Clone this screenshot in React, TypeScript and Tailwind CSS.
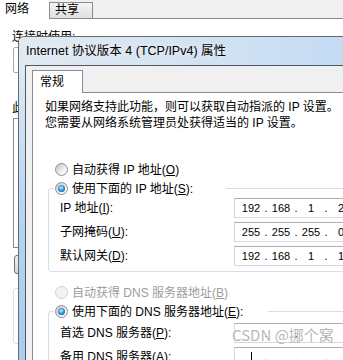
import { Fragment, type ReactNode } from "react";

function Radio({ checked, disabled }: { checked?: boolean; disabled?: boolean }) {
  return (
    <span
      className={`flex h-[13px] w-[13px] shrink-0 items-center justify-center rounded-full border ${
        disabled
          ? "border-[#d0d0d0] bg-[#f3f3f3]"
          : "border-[#8e8f8f] bg-[linear-gradient(135deg,#c4c4c4,#f7f7f7_70%)]"
      }`}
    >
      {checked && (
        <span className="h-[7px] w-[7px] rounded-full bg-[radial-gradient(circle_at_45%_40%,#c6f2ff_0%,#3fa4e6_40%,#155a91_80%,#0b3557_100%)]" />
      )}
    </span>
  );
}

function RadioRow({
  checked,
  disabled,
  className,
  children,
}: {
  checked?: boolean;
  disabled?: boolean;
  className?: string;
  children: ReactNode;
}) {
  return (
    <div
      className={`flex h-[19px] items-center gap-[4px] ${disabled ? "text-[#9d9d9d]" : ""} ${className ?? ""}`}
    >
      <Radio checked={checked} disabled={disabled} />
      <span className="whitespace-nowrap">{children}</span>
    </div>
  );
}

function IpField({ octets, caret }: { octets?: string[]; caret?: boolean }) {
  const parts = octets ?? ["", "", "", ""];
  return (
    <div className="flex h-[20px] w-[130px] items-center border border-[#d5d8de] border-t-[#a9adb4] bg-white pl-[3px] font-['Liberation_Sans',sans-serif] text-[11px] leading-[18px]">
      {parts.map((p, i) => (
        <Fragment key={i}>
          {i > 0 && <span className="w-[4px] text-center">.</span>}
          <span className="flex w-[26px] justify-center">
            {i === 0 && caret ? <span className="mt-[2px] h-[13px] w-px bg-black" /> : p}
          </span>
        </Fragment>
      ))}
    </div>
  );
}

function FieldRow({ label, octets, caret }: { label: ReactNode; octets?: string[]; caret?: boolean }) {
  return (
    <div className="flex h-[20px] items-center">
      <span className="w-[174px] whitespace-nowrap">{label}</span>
      <IpField octets={octets} caret={caret} />
    </div>
  );
}

export default function App() {
  return (
    <div className="relative h-[360px] w-[343px] overflow-hidden bg-white font-['Liberation_Sans','Noto_Sans_CJK_SC',sans-serif] text-[12px] leading-[16px] text-black">
      {/* window behind: 网络 / 共享 */}
      <div className="flex h-[19px]">
        <div className="w-[49px] bg-white pl-[5px] pt-[1px]">网络</div>
        <div className="flex flex-1 items-end border-b border-[#898c95] bg-[#f0f0f0]">
          <div className="h-[16px] w-[44px] border border-b-0 border-[#898c95] bg-gradient-to-b from-[#f4f4f4] to-[#e0e0e0] pl-[5px] leading-[15px]">
            共享
          </div>
        </div>
      </div>
      <div className="ml-[12px] mt-[10px] whitespace-nowrap">连接时使用:</div>
      <div className="ml-[13px] mt-[2px] h-[26px] w-[300px] rounded-[2px] border border-[#abadb3]" />
      <div className="ml-[12px] mt-[27px] whitespace-nowrap">
        此连接使用下列项目(<u>O</u>):
      </div>
      <div className="ml-[13px] mt-[2px] h-[130px] w-[300px] border border-[#828790]" />
      <div className="ml-[14px] mt-[7px] h-[19px] w-[75px] rounded-[3px] border border-[#707070] bg-gradient-to-b from-[#f2f2f2] to-[#d9d9d9]" />
      <div className="ml-[13px] mt-[14px] h-[56px] w-[300px] rounded-[3px] border border-[#d5dfe5]" />

      {/* TCP/IPv4 properties dialog */}
      <div className="absolute left-[18px] top-[36px] flex h-[360px] w-[420px] flex-col rounded-tl-[6px] border border-[#5f6a74] bg-gradient-to-b from-[#e4edf6] via-[#b7d4f0] to-[#a6caee]">
        <div className="flex h-[28px] items-center rounded-tl-[5px] bg-gradient-to-r from-[#e2eaf1] via-[#d0e1f2] to-[#bbd7f6] pl-[7px] text-[12.5px] [text-shadow:0_0_6px_rgba(255,255,255,0.9)]">
          Internet 协议版本 4 (TCP/IPv4) 属性
        </div>
        <div className="ml-[6px] flex-1 border-l border-t border-[#4f5861] bg-[#f0f0f0] pl-[6px] pt-[4px]">
          <div className="relative z-10 -mb-px h-[23px] w-[51px] border border-b-0 border-[#898c95] bg-white pl-[7px] leading-[22px]">
            常规
          </div>
          <div className="h-[300px] border-l border-t border-[#898c95] bg-white pl-[12px] pt-[6px]">
            <p className="whitespace-nowrap">如果网络支持此功能，则可以获取自动指派的 IP 设置。</p>
            <p className="whitespace-nowrap">您需要从网络系统管理员处获得适当的 IP 设置。</p>

            <RadioRow className="ml-[10px] mt-[29px]">
              自动获得 IP 地址(<u>O</u>)
            </RadioRow>
            <fieldset className="ml-[3px] w-[360px] rounded-[3px] border border-[#d5dfe5] pb-[5px]">
              <legend className="ml-[5px] w-[172px] pl-[1px]">
                <RadioRow checked>
                  使用下面的 IP 地址(<u>S</u>):
                </RadioRow>
              </legend>
              <div className="flex flex-col gap-[4px] pl-[11px]">
                <FieldRow label={<>IP 地址(<u>I</u>):</>} octets={["192", "168", "1", "2"]} />
                <FieldRow label={<>子网掩码(<u>U</u>):</>} octets={["255", "255", "255", "0"]} />
                <FieldRow label={<>默认网关(<u>D</u>):</>} octets={["192", "168", "1", "1"]} />
              </div>
            </fieldset>

            <RadioRow disabled className="ml-[10px] mt-[11px]">
              自动获得 DNS 服务器地址(<u>B</u>)
            </RadioRow>
            <fieldset className="ml-[3px] w-[360px] rounded-[3px] border border-[#d5dfe5] pb-[5px]">
              <legend className="ml-[5px] w-[214px] pl-[1px]">
                <RadioRow checked>
                  使用下面的 DNS 服务器地址(<u>E</u>):
                </RadioRow>
              </legend>
              <div className="flex flex-col gap-[4px] pl-[11px] pt-[2px]">
                <FieldRow label={<>首选 DNS 服务器(<u>P</u>):</>} />
                <FieldRow label={<>备用 DNS 服务器(<u>A</u>):</>} caret />
              </div>
            </fieldset>
          </div>
        </div>
      </div>

      {/* watermark */}
      <div className="absolute left-[232px] top-[326px] whitespace-nowrap font-['Noto_Sans_CJK_SC',sans-serif] text-[15px] leading-[18px] text-[#b8b8b8]">
        CSDN @挪个窝
      </div>
    </div>
  );
}
